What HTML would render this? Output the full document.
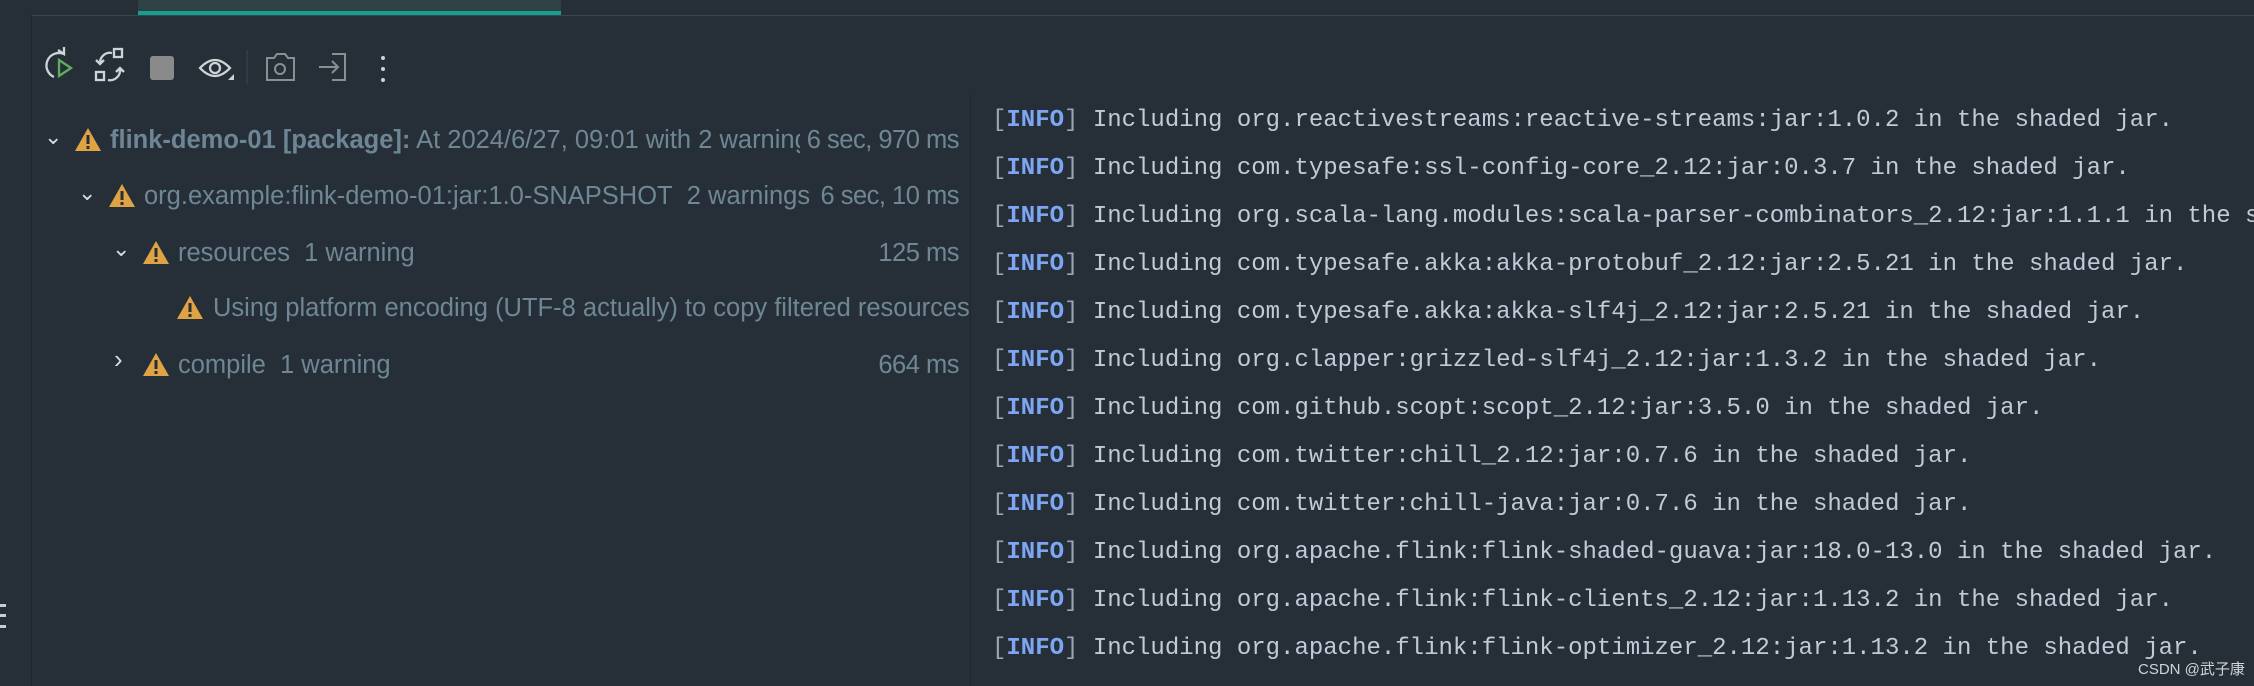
<!DOCTYPE html>
<html><head><meta charset="utf-8"><style>
*{margin:0;padding:0;box-sizing:border-box}
body{width:2254px;height:686px;background:#262f37;position:relative;overflow:hidden;font-family:"Liberation Sans",sans-serif}
.a{position:absolute}
.chev{position:absolute;color:#d5dbe0;font-size:22px}
.warn{position:absolute;width:28px;height:25px}
.t{position:absolute;font-size:25.5px;line-height:40px;color:#6f8795;white-space:nowrap}
.tm{position:absolute;right:1295px;font-size:25.5px;line-height:40px;color:#6f8795;white-space:nowrap;background:#262f37;padding-left:5px;letter-spacing:-0.5px}
.con{position:absolute;left:992px;font-family:"Liberation Mono",monospace;font-size:24px;color:#c1cad8;white-space:pre;line-height:40px}
.con b{color:#7fa6f5}
.con i{font-style:normal;color:#9aa5b4}
</style></head><body>
<div class="a" style="left:138px;top:0;width:423px;height:12px;background:#2f4047"></div>
<div class="a" style="left:138px;top:11px;width:423px;height:4px;background:#14a08a"></div>
<div class="a" style="left:32px;top:15px;width:2222px;height:1px;background:#384650"></div>
<div class="a" style="left:31px;top:15px;width:1px;height:671px;background:#1f272e"></div>
<div class="a" style="left:0;top:604px;width:6px;height:3px;background:#c8cdd2"></div>
<div class="a" style="left:0;top:614px;width:6px;height:3px;background:#c8cdd2"></div>
<div class="a" style="left:0;top:625px;width:6px;height:3px;background:#c8cdd2"></div>
<div class="a" style="left:970px;top:95px;width:1px;height:591px;background:#1f272e"></div>

<svg class="a" style="left:40px;top:46px" width="380" height="40" viewBox="0 0 380 40" fill="none" stroke-width="2.3">
<path d="M24 8 A12 12 0 1 0 14 31" stroke="#ced3d8"/><path d="M18 4 L24 8 L24 1" stroke="#ced3d8"/>
<path d="M19 14 L31 22 L19 30 Z" stroke="#5fae5c"/>
<rect x="74" y="3" width="8" height="8" stroke="#ced3d8"/><rect x="56" y="26" width="8" height="8" stroke="#ced3d8"/>
<path d="M72 7 A10 10 0 0 0 60 17 M56 14 L60 18 L64 14" stroke="#ced3d8"/>
<path d="M68 34 A10 10 0 0 0 80 23 M76 26 L80 22 L84 26" stroke="#ced3d8"/>
<rect x="110" y="10" width="24" height="24" rx="3" fill="#8a8a8a" stroke="none"/>
<path d="M160 22 Q175 6 190 22 Q175 38 160 22 Z" stroke="#ced3d8"/><circle cx="175" cy="22" r="5" stroke="#ced3d8"/>
<path d="M194 34 L194 28 L188 34 Z" fill="#ced3d8" stroke="none"/>
<path d="M207 4 V38" stroke="#34404a" stroke-width="1.5"/>
<path d="M227 12 H234 L237 8 H245 L248 12 H254 V34 H227 Z" stroke="#8a8f94" stroke-width="2"/><circle cx="240" cy="23" r="5" stroke="#8a8f94" stroke-width="2"/>
<path d="M292 8 H305 V34 H292 M279 21 H298 M292 15 L298 21 L292 27" stroke="#8a8f94" stroke-width="2"/>
<circle cx="343" cy="12" r="2" fill="#ced3d8" stroke="none"/><circle cx="343" cy="23" r="2" fill="#ced3d8" stroke="none"/><circle cx="343" cy="34" r="2" fill="#ced3d8" stroke="none"/>
</svg>

<!-- tree -->
<div class="chev" style="left:44px;top:124px">⌄</div>
<svg class="warn" style="left:74px;top:127px" viewBox="0 0 28 25"><path d="M14 1 L27 24 H1 Z" fill="#e0a343"/><rect x="12.5" y="8" width="3" height="9" fill="#262f37"/><rect x="12.5" y="19" width="3" height="3" fill="#262f37"/></svg>
<div class="t" style="left:110px;top:120px;width:690px;overflow:hidden"><b style="color:#6d8594">flink-demo-01 [package]:</b> At 2024/6/27, 09:01 with 2 warnings</div>
<div class="tm" style="top:120px">6 sec, 970 ms</div>

<div class="chev" style="left:78px;top:180px">⌄</div>
<svg class="warn" style="left:108px;top:183px" viewBox="0 0 28 25"><path d="M14 1 L27 24 H1 Z" fill="#e0a343"/><rect x="12.5" y="8" width="3" height="9" fill="#262f37"/><rect x="12.5" y="19" width="3" height="3" fill="#262f37"/></svg>
<div class="t" style="left:144px;top:176px;width:725px;overflow:hidden">org.example:flink-demo-01:jar:1.0-SNAPSHOT&nbsp; 2 warnings</div>
<div class="tm" style="top:176px">6 sec, 10 ms</div>

<div class="chev" style="left:112px;top:236px">⌄</div>
<svg class="warn" style="left:142px;top:240px" viewBox="0 0 28 25"><path d="M14 1 L27 24 H1 Z" fill="#e0a343"/><rect x="12.5" y="8" width="3" height="9" fill="#262f37"/><rect x="12.5" y="19" width="3" height="3" fill="#262f37"/></svg>
<div class="t" style="left:178px;top:233px">resources&nbsp; 1 warning</div>
<div class="tm" style="top:233px">125 ms</div>

<svg class="warn" style="left:176px;top:295px" viewBox="0 0 28 25"><path d="M14 1 L27 24 H1 Z" fill="#e0a343"/><rect x="12.5" y="8" width="3" height="9" fill="#262f37"/><rect x="12.5" y="19" width="3" height="3" fill="#262f37"/></svg>
<div class="t" style="left:213px;top:288px;width:757px;overflow:hidden">Using platform encoding (UTF-8 actually) to copy filtered resources</div>

<div class="chev" style="left:114px;top:344px;font-size:26px">›</div>
<svg class="warn" style="left:142px;top:352px" viewBox="0 0 28 25"><path d="M14 1 L27 24 H1 Z" fill="#e0a343"/><rect x="12.5" y="8" width="3" height="9" fill="#262f37"/><rect x="12.5" y="19" width="3" height="3" fill="#262f37"/></svg>
<div class="t" style="left:178px;top:345px">compile&nbsp; 1 warning</div>
<div class="tm" style="top:345px">664 ms</div>

<!-- console -->
<div class="con" style="top:101px"><i>[</i><b>INFO</b><i>]</i> Including org.reactivestreams:reactive-streams:jar:1.0.2 in the shaded jar.</div>
<div class="con" style="top:149px"><i>[</i><b>INFO</b><i>]</i> Including com.typesafe:ssl-config-core_2.12:jar:0.3.7 in the shaded jar.</div>
<div class="con" style="top:197px"><i>[</i><b>INFO</b><i>]</i> Including org.scala-lang.modules:scala-parser-combinators_2.12:jar:1.1.1 in the s</div>
<div class="con" style="top:245px"><i>[</i><b>INFO</b><i>]</i> Including com.typesafe.akka:akka-protobuf_2.12:jar:2.5.21 in the shaded jar.</div>
<div class="con" style="top:293px"><i>[</i><b>INFO</b><i>]</i> Including com.typesafe.akka:akka-slf4j_2.12:jar:2.5.21 in the shaded jar.</div>
<div class="con" style="top:341px"><i>[</i><b>INFO</b><i>]</i> Including org.clapper:grizzled-slf4j_2.12:jar:1.3.2 in the shaded jar.</div>
<div class="con" style="top:389px"><i>[</i><b>INFO</b><i>]</i> Including com.github.scopt:scopt_2.12:jar:3.5.0 in the shaded jar.</div>
<div class="con" style="top:437px"><i>[</i><b>INFO</b><i>]</i> Including com.twitter:chill_2.12:jar:0.7.6 in the shaded jar.</div>
<div class="con" style="top:485px"><i>[</i><b>INFO</b><i>]</i> Including com.twitter:chill-java:jar:0.7.6 in the shaded jar.</div>
<div class="con" style="top:533px"><i>[</i><b>INFO</b><i>]</i> Including org.apache.flink:flink-shaded-guava:jar:18.0-13.0 in the shaded jar.</div>
<div class="con" style="top:581px"><i>[</i><b>INFO</b><i>]</i> Including org.apache.flink:flink-clients_2.12:jar:1.13.2 in the shaded jar.</div>
<div class="con" style="top:629px"><i>[</i><b>INFO</b><i>]</i> Including org.apache.flink:flink-optimizer_2.12:jar:1.13.2 in the shaded jar.</div>
<div class="a" style="left:2138px;top:658px;font-size:15px;color:#d0d4d8;font-family:'Liberation Sans','Noto Sans CJK SC',sans-serif;white-space:nowrap">CSDN @武子康</div>
</body></html>
